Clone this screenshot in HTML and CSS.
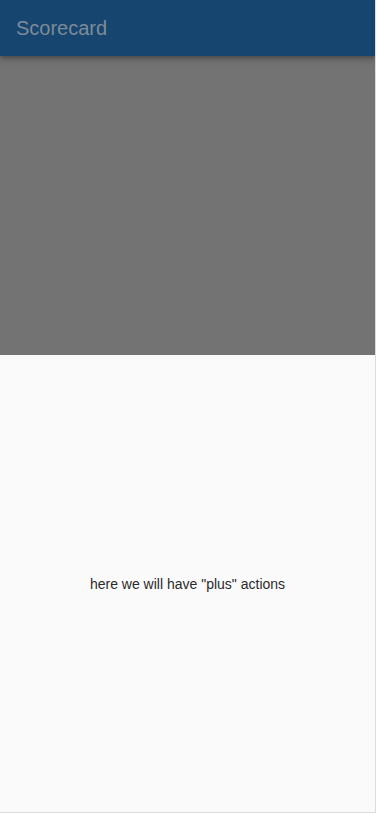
FILE: index.html
```html
<!DOCTYPE html>
<html>
<head>
<meta charset="utf-8">
<link rel="stylesheet" href="styles.css">
</head>
<body>
<div class="device">
  <header class="appbar"><span class="title">Scorecard</span></header>
  <div class="panel"></div>
  <main class="actions"><p class="note">here we will have "plus" actions</p></main>
</div>
</body>
</html>
```
FILE: styles.css
```css
html, body { margin: 0; padding: 0; background: #ffffff; }
body { font-family: "Liberation Sans", Arial, sans-serif; }
.device {
  width: 375px;
  height: 812px;
  border-right: 1px solid #dcdcdc;
  border-bottom: 1px solid #dcdcdc;
  display: flex;
  flex-direction: column;
  background: #fafafa;
  overflow: hidden;
}
.appbar {
  height: 56px;
  flex: none;
  background: #164670;
  display: flex;
  align-items: center;
  padding: 0 16px;
  box-shadow: 0 2px 4px rgba(0,0,0,0.25), 0 4px 8px rgba(0,0,0,0.15);
  position: relative;
  z-index: 1;
}
.title { color: #7d8b98; font-size: 20px; }
.panel { height: 299px; flex: none; background: #737373; }
.actions {
  flex: 1;
  display: flex;
  align-items: center;
  justify-content: center;
}
.note { margin: 0; font-size: 14px; color: #2a2a2a; }
```
